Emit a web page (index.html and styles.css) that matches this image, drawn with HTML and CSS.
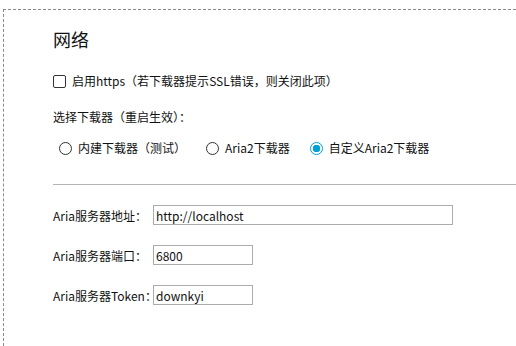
FILE: index.html
```html
<!DOCTYPE html>
<html lang="zh-CN">
  <head>
    <meta charset="UTF-8" />
    <meta name="viewport" content="width=device-width, initial-scale=1.0" />
    <title>网络设置</title>
    <link rel="stylesheet" href="styles.css">
  </head>
  <body>
    <div class="page">
      <h2 class="page-title">网络</h2>

      <label class="check-row">
        <input type="checkbox" class="check-box" />
        <span>启用https（若下载器提示SSL错误，则关闭此项）</span>
      </label>

      <div class="section-label">选择下载器（重启生效）：</div>
      <div class="radio-group">
        <label class="radio-item">
          <input type="radio" name="downloader" class="radio-dot" />
          <span>内建下载器（测试）</span>
        </label>
        <label class="radio-item">
          <input type="radio" name="downloader" class="radio-dot" />
          <span>Aria2下载器</span>
        </label>
        <label class="radio-item">
          <input type="radio" name="downloader" class="radio-dot" checked />
          <span>自定义Aria2下载器</span>
        </label>
      </div>

      <div class="divider"></div>

      <div class="field-list">
        <div class="field-row">
          <label class="field-label" for="ariaHost">Aria服务器地址：</label>
          <input class="field-input wide" id="ariaHost" type="text" value="http://localhost" />
        </div>
        <div class="field-row">
          <label class="field-label" for="ariaPort">Aria服务器端口：</label>
          <input class="field-input" id="ariaPort" type="text" value="6800" />
        </div>
        <div class="field-row">
          <label class="field-label" for="ariaToken">Aria服务器Token：</label>
          <input class="field-input" id="ariaToken" type="text" value="downkyi" />
        </div>
      </div>
    </div>
  </body>
</html>
```

FILE: styles.css
```css
body {
  margin: 0;
  padding: 0;
  font-family: "Noto Sans CJK SC", "Noto Sans", sans-serif;
  font-size: 12px;
  color: #111;
  background: #fff;
}

.page {
  margin: 9px 0 0 3px;
  height: 337px;
  box-sizing: border-box;
  border-top: 1px dashed #8a8a8a;
  border-left: 1px dashed #8a8a8a;
  padding: 17px 0 0 49px;
  overflow: hidden;
}

.page-title {
  margin: 0;
  font-size: 18px;
  font-weight: normal;
  line-height: 24px;
}

.check-row {
  display: flex;
  align-items: center;
  gap: 6px;
  margin-top: 22px;
  line-height: 16px;
}

.check-box {
  appearance: none;
  margin: 0;
  width: 13px;
  height: 13px;
  border: 1px solid #333;
  border-radius: 2px;
  box-sizing: border-box;
  background: #fff;
}

.section-label {
  margin-top: 20px;
  line-height: 16px;
}

.radio-group {
  display: flex;
  align-items: center;
  gap: 20px;
  margin-top: 15px;
  padding-left: 6px;
  line-height: 16px;
}

.radio-item {
  display: flex;
  align-items: center;
  gap: 6px;
}

.radio-dot {
  appearance: none;
  margin: 0;
  width: 13px;
  height: 13px;
  border: 1px solid #333;
  border-radius: 50%;
  box-sizing: border-box;
  background: #fff;
}

.radio-dot:checked {
  border-color: #00a1d6;
  background: radial-gradient(circle, #00a1d6 0 3.5px, #fff 4px);
}

.divider {
  margin-top: 28px;
  height: 1px;
  background: #b4b4b4;
}

.field-list {
  display: flex;
  flex-direction: column;
  gap: 20px;
  margin-top: 20px;
}

.field-row {
  display: grid;
  grid-template-columns: 100px auto;
  align-items: center;
}

.field-label {
  white-space: nowrap;
}

.field-input {
  width: 100px;
  height: 20px;
  box-sizing: border-box;
  margin: 0;
  padding: 0 2px;
  border: 1px solid #ababab;
  font-family: "Noto Sans CJK SC", "Noto Sans", sans-serif;
  font-size: 12px;
  color: #111;
  outline: none;
}

.field-input.wide {
  width: 300px;
}
```
